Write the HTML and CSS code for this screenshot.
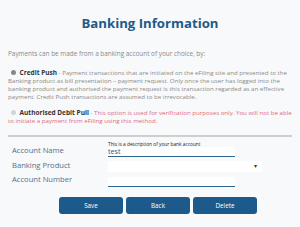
FILE: index.html
```html
<!DOCTYPE html>
<html lang="en">
<head>
    <meta charset="UTF-8">
    <title>Banking Information</title>
    <link rel="stylesheet" href="styles.css">
</head>
<body>
    <div class="page">
        <h1 class="title">Banking Information</h1>
        <p class="intro">Payments can be made from a banking account of your choice, by:</p>

        <p class="option">
            <span class="radio checked"></span>
            <b>Credit Push</b> - Payment transactions that are initiated on the eFiling site and presented to the Banking product as bill presentation &ndash; payment request. Only once the user has logged into the banking product and authorised the payment request is this transaction regarded as an effective payment. Credit Push transactions are assumed to be irrevocable.
        </p>
        <p class="option debit">
            <span class="radio"></span>
            <b>Authorised Debit Pull</b> - This option is used for verification purposes only. You will not be able to initiate a payment from eFiling using this method.
        </p>

        <div class="divider"></div>

        <div class="form">
            <div class="row">
                <label class="label">Account Name</label>
                <div class="field">
                    <div class="hint">This is a description of your bank account</div>
                    <div class="input">test</div>
                </div>
            </div>
            <div class="row">
                <label class="label">Banking Product</label>
                <div class="field">
                    <div class="select"><span class="arrow">&#9662;</span></div>
                </div>
            </div>
            <div class="row number">
                <label class="label">Account Number</label>
                <div class="field">
                    <div class="input"></div>
                </div>
            </div>
        </div>

        <div class="buttons">
            <button class="button">Save</button>
            <button class="button">Back</button>
            <button class="button">Delete</button>
        </div>
    </div>
</body>
</html>
```

FILE: styles.css
```css
body {
    margin: 0;
    background: #f8f9fa;
    font-family: "Open Sans", sans-serif;
    color: #8a8a8a;
}
.page {
    padding: 0 8px;
}
.title {
    margin: 0;
    padding-top: 14px;
    height: 22px;
    text-align: center;
    font-size: 13.2px;
    font-weight: bold;
    color: #1d5b88;
}
.intro {
    margin: 14px 0 0;
    font-size: 6.4px;
    line-height: 8px;
}
.option {
    margin: 11px 0 0;
    font-size: 6.15px;
    line-height: 8px;
}
.option b {
    color: #333;
    font-size: 6.5px;
}
.debit {
    color: #e0697c;
    margin-top: 8px;
}
.radio {
    display: inline-block;
    width: 5px;
    height: 5px;
    margin: 0 2px 0 3px;
    border-radius: 50%;
    background: #d4d4d4;
}
.radio.checked {
    background: #888;
}
.divider {
    height: 2px;
    background: #cfcfcf;
    margin-top: 10px;
}
.form {
    margin-top: 4px;
}
.row {
    display: flex;
    align-items: flex-end;
}
.label {
    width: 96px;
    padding-left: 4px;
    font-size: 7.6px;
    color: #566e89;
    line-height: 12px;
    margin-bottom: 1px;
}
.field {
    flex: 1;
}
.hint {
    font-size: 4.8px;
    color: #222;
    line-height: 6px;
}
.input {
    width: 127px;
    height: 9px;
    background: #fff;
    border-bottom: 1.5px solid #2e6690;
    font-size: 7.2px;
    line-height: 9px;
    color: #1d5b88;
}
.select {
    width: 154px;
    height: 11px;
    background: #fff;
    position: relative;
    margin-top: 4px;
}
.arrow {
    position: absolute;
    right: 5px;
    top: 1px;
    font-size: 6px;
    color: #333;
}
.number {
    align-items: center;
}
.number .input {
    margin-top: 5px;
}
.buttons {
    display: flex;
    justify-content: center;
    gap: 3px;
    margin-top: 10px;
    padding-left: 16px;
}
.button {
    width: 64px;
    height: 17px;
    border: none;
    border-radius: 3px;
    background: #1c5a8b;
    color: #fff;
    font-family: "Open Sans", sans-serif;
    font-size: 6.3px;
    padding: 0;
}
```
